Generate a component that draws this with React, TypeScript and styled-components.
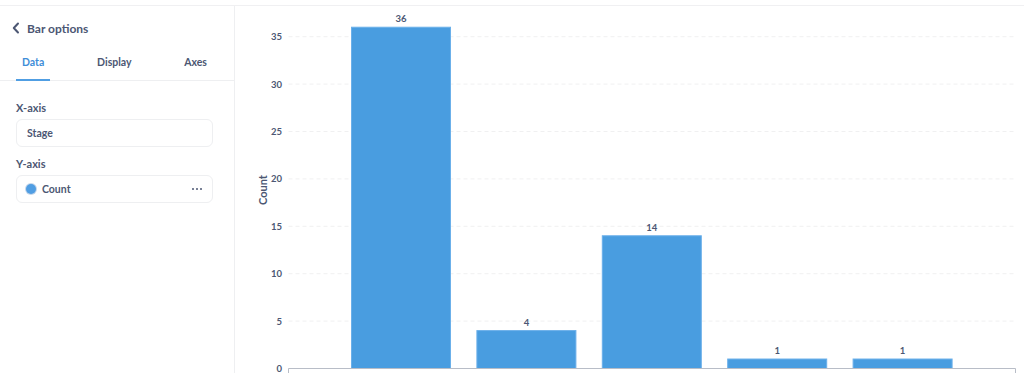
import React from 'react';
import styled, { createGlobalStyle } from 'styled-components';

const GlobalStyle = createGlobalStyle`
  html, body {
    margin: 0;
    padding: 0;
    background: #ffffff;
    font-family: Lato, "Noto Sans", "Liberation Sans", sans-serif;
    color: #4c5773;
  }
`;

type Bar = { value: number };

const data: Bar[] = [{ value: 36 }, { value: 4 }, { value: 14 }, { value: 1 }, { value: 1 }];

export default function App() {
  return (
    <>
      <GlobalStyle />
      <StyledPage>
        <StyledTopStrip />
        <StyledBody>
          <Sidebar />
          <StyledMain>
            <Chart bars={data} />
          </StyledMain>
        </StyledBody>
      </StyledPage>
    </>
  );
}

function Sidebar() {
  return (
    <StyledSidebar>
      <StyledHeader>
        <svg width="10" height="12" viewBox="0 0 10 12">
          <path d="M7 1.5 L2.8 6 L7 10.5" fill="none" stroke="#4c5773" strokeWidth="2" strokeLinecap="round" strokeLinejoin="round" />
        </svg>
        <StyledTitle>Bar options</StyledTitle>
      </StyledHeader>
      <StyledTabs>
        <StyledTab active>Data</StyledTab>
        <StyledTab>Display</StyledTab>
        <StyledTab>Axes</StyledTab>
      </StyledTabs>
      <StyledSection>
        <StyledLabel>X-axis</StyledLabel>
        <StyledField>
          <StyledFieldText>Stage</StyledFieldText>
        </StyledField>
        <StyledLabel>Y-axis</StyledLabel>
        <StyledField>
          <StyledDot />
          <StyledFieldText>Count</StyledFieldText>
          <StyledMore>
            <i />
            <i />
            <i />
          </StyledMore>
        </StyledField>
      </StyledSection>
    </StyledSidebar>
  );
}

// chart coordinates are relative to the main pane (x 235, y 6)
const OX = 235;
const OY = 6;
const ZERO = 368.5 - OY;
const UNIT = 9.48;
const LEFT = 288.5 - OX;
const RIGHT = 1015.5 - OX;
const BAR_W = 99;
const BAR_STEP = 125.4;
const FIRST_BAR = 351.5 - OX;

function Chart({ bars }: { bars: Bar[] }) {
  const ticks = [0, 5, 10, 15, 20, 25, 30, 35];
  return (
    <svg width="789" height="367" viewBox="0 0 789 367">
      {ticks.map((t) => {
        const y = ZERO - t * UNIT;
        return (
          <g key={t}>
            {t > 0 && (
              <line x1={LEFT} x2={RIGHT} y1={y} y2={y} stroke="#f0f0f1" strokeWidth="1" strokeDasharray="4 3" />
            )}
            <text x={282 - OX} y={y + 3.5} textAnchor="end" fontSize="9.5" fontWeight="700" fill="#4c5773" fontFamily="Lato, sans-serif">
              {t}
            </text>
          </g>
        );
      })}
      <text
        transform={`translate(${263 - OX + 4}, ${190 - OY}) rotate(-90)`}
        textAnchor="middle"
        fontSize="11"
        fontWeight="700"
        fill="#4c5773"
        fontFamily="Lato, sans-serif"
      >
        Count
      </text>
      {bars.map((b, i) => {
        const x = FIRST_BAR + i * BAR_STEP;
        const h = b.value * UNIT;
        return (
          <g key={i}>
            <rect x={x} y={ZERO - h} width={BAR_W} height={h} fill="#499de0" stroke="#6bb0ea" strokeWidth="1" />
            <text x={x + BAR_W / 2} y={ZERO - h - 5} textAnchor="middle" fontSize="9.5" fontWeight="700" fill="#4c5773" fontFamily="Lato, sans-serif">
              {b.value}
            </text>
          </g>
        );
      })}
      <path d={`M${LEFT} 367 V${ZERO} H${RIGHT} V367`} fill="none" stroke="#b8bdc7" strokeWidth="1" />
    </svg>
  );
}

const StyledPage = styled.div`
  width: 1024px;
  height: 373px;
  overflow: hidden;
  display: flex;
  flex-direction: column;
`;

const StyledTopStrip = styled.div`
  height: 5px;
  flex-shrink: 0;
  border-bottom: 1px solid #f0f0f2;
`;

const StyledBody = styled.div`
  flex: 1;
  display: flex;
  min-height: 0;
`;

const StyledSidebar = styled.div`
  width: 234px;
  flex-shrink: 0;
  border-right: 1px solid #eeeff1;
  display: flex;
  flex-direction: column;
`;

const StyledHeader = styled.div`
  height: 44px;
  display: flex;
  align-items: center;
  gap: 6px;
  padding: 0 0 0 11px;
`;

const StyledTitle = styled.span`
  font-size: 12px;
  font-weight: 700;
  color: #4c5773;
`;

const StyledTabs = styled.div`
  display: flex;
  justify-content: space-between;
  padding: 0 21px 0 16px;
  border-bottom: 1px solid #eeeff1;
`;

const StyledTab = styled.div<{ active?: boolean }>`
  padding: 6px 6px 10px;
  font-size: 10.5px;
  font-weight: 700;
  line-height: 13px;
  color: ${(p) => (p.active ? '#3f8ed8' : '#4c5773')};
  border-bottom: 2px solid ${(p) => (p.active ? '#509ee3' : 'transparent')};
  margin-bottom: -1px;
`;

const StyledSection = styled.div`
  padding: 20px 21px 0 16px;
  display: flex;
  flex-direction: column;
`;

const StyledLabel = styled.div`
  font-size: 11px;
  font-weight: 700;
  line-height: 13px;
  color: #4c5773;
  margin-bottom: 5px;
`;

const StyledField = styled.div`
  height: 28px;
  box-sizing: border-box;
  border: 1px solid #eeeff1;
  border-radius: 6px;
  display: flex;
  align-items: center;
  padding: 0 10px 0 8px;
  gap: 4px;
  margin-bottom: 10px;
`;

const StyledFieldText = styled.span`
  flex: 1;
  font-size: 10.5px;
  font-weight: 700;
  color: #4c5773;
  padding-left: 2px;
`;

const StyledDot = styled.span`
  width: 10px;
  height: 10px;
  border-radius: 50%;
  background: #509ee3;
  box-shadow: 0 0 0 1px #c4d6ea;
  margin-left: 1px;
`;

const StyledMore = styled.span`
  display: flex;
  gap: 2px;
  & > i {
    width: 2px;
    height: 2px;
    background: #4c5773;
    border-radius: 1px;
  }
`;

const StyledMain = styled.div`
  flex: 1;
  min-width: 0;
  overflow: hidden;
  & > svg {
    display: block;
  }
`;
